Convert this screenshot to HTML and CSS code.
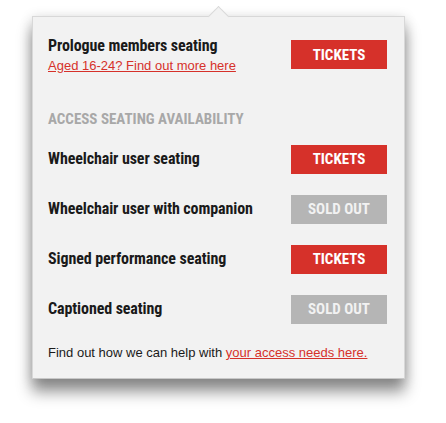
FILE: index.html
```html
<!DOCTYPE html>
<html>
<head>
<meta charset="utf-8">
<link rel="stylesheet" href="styles.css">
</head>
<body>
<div class="popover">
  <span class="arrow"></span>
  <div class="row intro">
    <div class="intro-text">
      <div class="label">Prologue members seating</div>
      <a class="link" href="#">Aged 16-24? Find out more here</a>
    </div>
    <a class="btn btn-red" href="#">TICKETS</a>
  </div>
  <div class="heading">ACCESS SEATING AVAILABILITY</div>
  <div class="list">
    <div class="row"><span class="label">Wheelchair user seating</span><a class="btn btn-red" href="#">TICKETS</a></div>
    <div class="row"><span class="label">Wheelchair user with companion</span><span class="btn btn-grey">SOLD OUT</span></div>
    <div class="row"><span class="label">Signed performance seating</span><a class="btn btn-red" href="#">TICKETS</a></div>
    <div class="row"><span class="label">Captioned seating</span><span class="btn btn-grey">SOLD OUT</span></div>
  </div>
  <p class="footer">Find out how we can help with <a class="link" href="#">your access needs here.</a></p>
</div>
</body>
</html>
```
FILE: styles.css
```css
html, body {
  margin: 0;
  padding: 0;
  background: #ffffff;
}
body {
  box-sizing: border-box;
  min-height: 423px;
  padding: 16px 0 0 32px;
  font-family: "Liberation Sans", Arial, sans-serif;
}
.popover {
  position: relative;
  box-sizing: border-box;
  width: 373px;
  height: 363px;
  background: #f2f2f2;
  border: 1px solid #d8d8d8;
  border-bottom-color: #c8c8c8;
  padding: 23px 17px 0 15px;
  box-shadow: 0 13px 14px rgba(0, 0, 0, 0.42), 0 2px 12px rgba(0, 0, 0, 0.16);
}
.arrow {
  position: absolute;
  left: 178px;
  top: -8px;
  width: 14px;
  height: 14px;
  background: #f2f2f2;
  border-top: 1px solid #d8d8d8;
  border-left: 1px solid #d8d8d8;
  transform: rotate(45deg);
}
.row {
  display: flex;
  justify-content: space-between;
  align-items: center;
  height: 30px;
}
.intro {
  height: 29px;
}
.intro-text {
  display: flex;
  flex-direction: column;
  gap: 2px;
  margin-top: 2px;
}
.label {
  font-family: "Liberation Sans Narrow", "Roboto Condensed", "Liberation Sans", sans-serif;
  font-weight: bold;
  font-size: 16px;
  line-height: 18px;
  color: #1a1a1a;
  letter-spacing: -0.1px;
}
.link {
  font-size: 13px;
  line-height: 17px;
  color: #d6312a;
  text-decoration: underline;
}
.heading {
  margin-top: 41px;
  margin-bottom: 16px;
  font-family: "Liberation Sans Narrow", "Roboto Condensed", "Liberation Sans", sans-serif;
  font-weight: bold;
  font-size: 15px;
  line-height: 18px;
  color: #a8a8a8;
}
.list {
  display: flex;
  flex-direction: column;
  gap: 20px;
}
.btn {
  box-sizing: border-box;
  width: 96px;
  height: 29px;
  display: flex;
  align-items: center;
  justify-content: center;
  font-family: "Liberation Sans Narrow", "Roboto Condensed", "Liberation Sans", sans-serif;
  font-weight: bold;
  font-size: 15px;
  color: #ffffff;
  text-decoration: none;
}
.btn-red {
  background: #d6312a;
}
.btn-grey {
  background: #b5b5b5;
  color: #f2f2f2;
}
.footer {
  margin: 20px 0 0;
  font-size: 13px;
  line-height: 16px;
  color: #1a1a1a;
}
```
